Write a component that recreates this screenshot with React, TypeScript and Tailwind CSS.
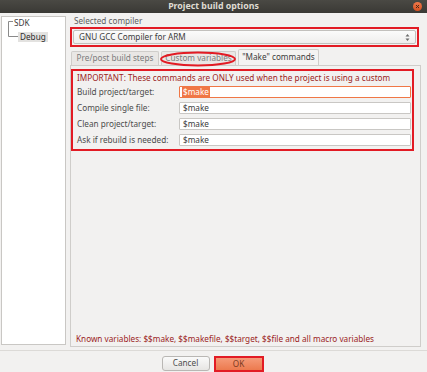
import React from 'react';

const rows = [
  { label: 'Build project/target:', value: '$make', focused: true },
  { label: 'Compile single file:', value: '$make' },
  { label: 'Clean project/target:', value: '$make' },
  { label: 'Ask if rebuild is needed:', value: '$make' },
];

function TitleBar() {
  return (
    <div className="relative h-[13px] shrink-0 bg-gradient-to-b from-[#4a4944] to-[#3a3935] flex items-center justify-center">
      <span className="text-[8.8px] font-bold text-[#dfdbd2] leading-none">Project build options</span>
      <div className="absolute right-[5px] top-[2px] w-[9px] h-[9px] rounded-full bg-gradient-to-b from-[#f0784a] to-[#d6501f] flex items-center justify-center">
        <svg width="5" height="5" viewBox="0 0 5 5">
          <path d="M1 1 L4 4 M4 1 L1 4" stroke="#4a2a1a" strokeWidth="1" />
        </svg>
      </div>
    </div>
  );
}

function Tree() {
  return (
    <div className="relative w-[65px] h-[329px] bg-white border border-[#c9c7c4] ml-[1px]">
      <svg className="absolute left-0 top-0" width="20" height="22" viewBox="0 0 20 22">
        <path d="M6.5 4.5 V19.5 M6.5 4.5 H11 M6.5 19.5 H16" stroke="#8a8a8a" strokeWidth="1" fill="none" />
      </svg>
      <div className="absolute left-[12px] top-[0px] text-[8.2px] text-[#3c3c3c] leading-[11px]">SDK</div>
      <div className="absolute left-[16px] top-[15px] px-[2px] bg-[#e3e2e0] text-[8.2px] text-[#2c2c2c] leading-[10px]">Debug</div>
    </div>
  );
}

function Tabs() {
  return (
    <div className="relative flex items-end h-[16px] mt-[2px] pl-[1px] gap-[2px]">
      <div className="w-[88px] h-[14px] flex items-center justify-center border border-b-0 border-[#cfcdca] bg-[#e9e7e5] rounded-t-[2px] text-[8.2px] text-[#7b7b7b]">Pre/post build steps</div>
      <div className="w-[75px] h-[14px] flex items-center justify-center border border-b-0 border-[#cfcdca] bg-[#e9e7e5] rounded-t-[2px] text-[8.2px] text-[#7b7b7b]">Custom variables</div>
      <div className="w-[81px] h-[16px] flex items-center justify-center border border-b-0 border-[#cfcdca] bg-[#f4f3f2] rounded-t-[2px] text-[8.2px] text-[#3c3c3c]">"Make" commands</div>
      <svg className="absolute left-[90px] top-[2px]" width="80" height="16" viewBox="0 0 80 16">
        <ellipse cx="38" cy="8" rx="37" ry="6.5" stroke="#e21b24" strokeWidth="2" fill="none" />
      </svg>
    </div>
  );
}

export default function App() {
  return (
    <div
      className="w-[427px] h-[372px] bg-[#f2f1f0] flex flex-col overflow-hidden"
      style={{ fontFamily: '"Noto Sans", "Open Sans", sans-serif' }}
    >
      <TitleBar />
      <div className="flex pt-[3px] gap-[4px]">
        <Tree />
        <div className="flex flex-col w-[351px]">
          <div className="text-[8.2px] text-[#5e5e5e] leading-[10px] pl-[4px]">Selected compiler</div>
          <div className="mt-[1px] h-[20px] w-[349px] border-2 border-[#e21b24] p-[1px]">
            <div className="h-full bg-gradient-to-b from-[#fbfbfb] to-[#efeeed] border border-[#c2c0bd] rounded-[2px] flex items-center justify-between pl-[5px] pr-[5px]">
              <span className="text-[8.2px] text-[#3c3c3c]">GNU GCC Compiler for ARM</span>
              <svg width="5" height="9" viewBox="0 0 5 9">
                <path d="M0.5 3.5 L2.5 1 L4.5 3.5 Z M0.5 5.5 L2.5 8 L4.5 5.5 Z" fill="#6c6c6c" />
              </svg>
            </div>
          </div>
          <Tabs />
          <div className="h-[282px] w-[351px] border border-[#cfcdca] bg-[#f2f1f0] flex flex-col">
            <div className="mt-[3px] w-[343px] border-2 border-[#e21b24] pl-[4px] pt-[1px] pb-[3px]">
              <div className="text-[8.2px] text-[#9b1d1d] leading-[12px] whitespace-nowrap">
                IMPORTANT: These commands are ONLY used when the project is using a custom
              </div>
              <div className="flex flex-col gap-[4px] mt-[2px]">
                {rows.map((r) => (
                  <div key={r.label} className="flex items-center h-[12px]">
                    <div className="w-[102px] text-[8.2px] text-[#4c4c4c] leading-none">{r.label}</div>
                    <div
                      className={`w-[232px] h-[12px] bg-white flex items-center pl-[2px] border ${
                        r.focused ? 'border-[#f07746]' : 'border-[#c9c7c4]'
                      } rounded-[1px]`}
                    >
                      <span
                        className={`text-[8.2px] leading-[10px] px-[1px] ${
                          r.focused ? 'bg-[#f07746] text-white' : 'text-[#3c3c3c]'
                        }`}
                      >
                        {r.value}
                      </span>
                    </div>
                  </div>
                ))}
              </div>
            </div>
            <div className="flex-1" />
            <div className="text-[8.2px] text-[#9b1d1d] leading-[12px] pl-[5px] pb-[1px]">
              Known variables: $$make, $$makefile, $$target, $$file and all macro variables
            </div>
          </div>
        </div>
      </div>
      <div className="mt-[3px] border-t border-[#dcdad7]" />
      <div className="flex justify-center gap-[4px] mt-[5px] pr-[2px]">
        <div className="w-[48px] h-[15px] border border-[#b9b7b4] rounded-[3px] bg-gradient-to-b from-[#fafafa] to-[#e6e5e3] flex items-center justify-center text-[8.2px] text-[#4c4c4c]">
          Cancel
        </div>
        <div className="w-[50px] h-[16px] border-2 border-[#e21b24] bg-gradient-to-b from-[#f59a78] to-[#ec7a4e] flex items-center justify-center text-[8.2px] text-[#7a3a22]">
          OK
        </div>
      </div>
    </div>
  );
}
